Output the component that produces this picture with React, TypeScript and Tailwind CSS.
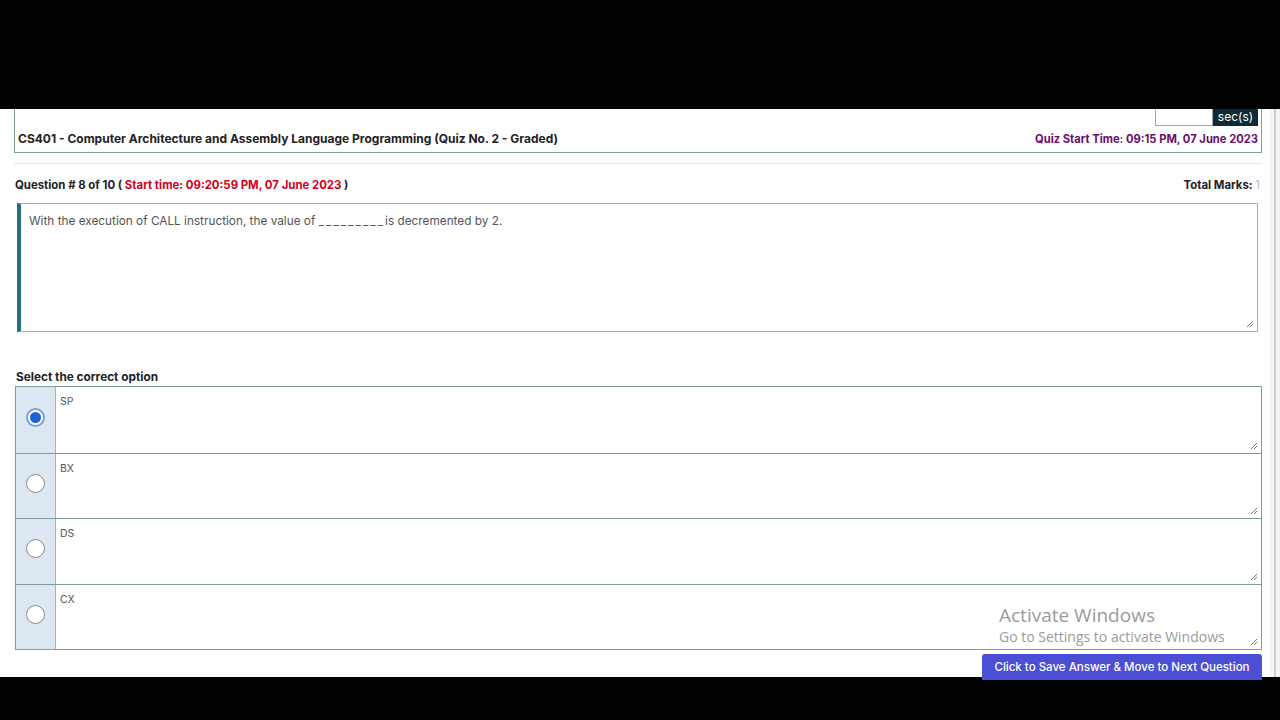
import React from "react";

const options = ["SP", "BX", "DS", "CX"];

const Grip = () => (
  <svg className="absolute right-[3px] bottom-[3px]" width="8" height="8" viewBox="0 0 8 8">
    <path d="M7 1 L1 7 M7 4 L4 7" stroke="#777" strokeWidth="1" fill="none" />
  </svg>
);

const Radio = ({ on }: { on: boolean }) =>
  on ? (
    <div className="w-[19px] h-[19px] rounded-full border-2 border-[#7ea3d6] bg-white flex items-center justify-center">
      <div className="w-[11px] h-[11px] rounded-full bg-[#1a66d9]" />
    </div>
  ) : (
    <div className="w-[19px] h-[19px] rounded-full border border-[#8a8a8a] bg-white" />
  );

const App = () => {
  return (
    <div className="w-[1280px] h-[720px] bg-black overflow-hidden" style={{ fontFamily: "Inter, 'Open Sans', sans-serif" }}>
      <div className="h-[109px]" />
      <div className="h-[568px] bg-white flex">
        <div className="flex-1 pl-[14px] pr-[8px] relative">
          {/* header */}
          <div className="border-x border-b border-[#7f9c9c] h-[44px]">
            <div className="flex justify-end pr-[3px]">
              <div className="w-[58px] h-[17px] border border-t-0 border-[#9aa9a9] bg-white" />
              <div className="w-[45px] h-[17px] bg-[#0d2b36] text-white text-[12px] leading-[15px] text-center">sec(s)</div>
            </div>
            <div className="flex justify-between items-center px-[3px] mt-[4px]">
              <span className="text-[12px] font-bold text-[#222]">CS401 - Computer Architecture and Assembly Language Programming (Quiz No. 2 - Graded)</span>
              <span className="text-[11.2px] font-bold text-[#6a0f6a]">Quiz Start Time: 09:15 PM, 07 June 2023</span>
            </div>
          </div>
          <div className="h-px bg-[#e6e6e6] mt-[10px]" />
          {/* question line */}
          <div className="flex justify-between items-center mt-[14px] pl-[1px] h-[16px]">
            <span className="text-[11.4px] font-bold text-[#222]">
              Question # 8 of 10 ( <span className="text-[#d3001c]">Start time: 09:20:59 PM, 07 June 2023</span> )
            </span>
            <span className="text-[11.4px] font-bold text-[#222] pr-[2px]">
              Total Marks: <span className="text-[#bbb] font-normal">1</span>
            </span>
          </div>
          {/* question box */}
          <div className="relative mt-[9px] ml-[3px] mr-[4px] h-[129px] border border-[#9fb4b4] border-l-[4px] border-l-[#2b6c84] pl-[8px] pt-[7px] leading-[16px]">
            <span className="text-[11.8px] text-[#555]">
              With the execution of CALL instruction, the value of{" "}
              <span className="tracking-[2px]">_________</span>is decremented by 2.
            </span>
            <Grip />
          </div>
          <div className="text-[11.8px] font-bold text-[#222] mt-[37px] ml-[2px] h-[16px] leading-[16px]">Select the correct option</div>
          {/* options */}
          <div className="mt-px ml-[1px] border border-[#7f9c9c]">
            {options.map((o, i) => (
              <div key={o} className={`flex h-[65.5px] ${i > 0 ? "border-t border-[#7f9c9c]" : ""}`}>
                <div className="w-[40px] bg-[#dde7f1] border-r border-[#9fb4c4] flex items-center justify-center pb-[5px]">
                  <Radio on={i === 0} />
                </div>
                <div className="flex-1 relative pl-[4px] pt-[4px] leading-[16px]">
                  <span className="text-[10.5px] text-[#555]">{o}</span>
                  <Grip />
                </div>
              </div>
            ))}
          </div>
          <div className="flex justify-end mt-[4px]">
            <button className="w-[280px] h-[26px] bg-[#4b4fd6] rounded-t-[3px] text-white text-[11.5px] font-medium leading-[26px]">
              Click to Save Answer &amp; Move to Next Question
            </button>
          </div>
          {/* windows watermark */}
          <div className="absolute left-[999px] top-[494px] text-[#9b9b9b] pointer-events-none" style={{ fontFamily: "'Open Sans', sans-serif" }}>
            <div className="text-[19px] leading-[24px]">Activate Windows</div>
            <div className="text-[14px] leading-[18px] mt-[1px]">Go to Settings to activate Windows</div>
          </div>
        </div>
        <div className="w-[10px] bg-[#f3f3f3] flex justify-center">
          <div className="w-[2px] bg-[#cfcfcf]" />
        </div>
      </div>
    </div>
  );
};

export default App;
